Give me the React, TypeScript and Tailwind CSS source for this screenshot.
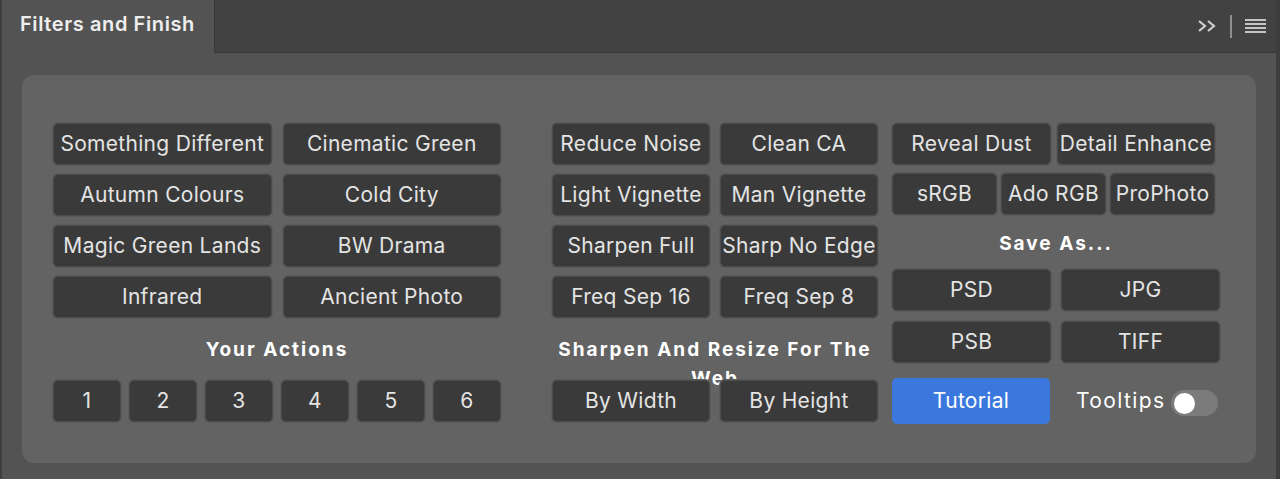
import type { ReactNode } from "react"

const font = { fontFamily: "Inter, 'Liberation Sans', sans-serif" }

const Btn = ({ children, className = "" }: { children: ReactNode; className?: string }) => (
  <div
    className={`relative flex h-[42px] items-center justify-center whitespace-nowrap rounded-[5px] border border-[#4c4c4c] bg-[#3a3a3a] text-[21px] tracking-[0.3px] text-[#e4e4e4] shadow-[0_0_0_1px_#5a5a5a] ${className}`}
  >
    {children}
  </div>
)

const Title = ({ children }: { children: ReactNode }) => (
  <div className="mt-[17px] h-[29px] text-center text-[19px] font-bold leading-[29px] tracking-[2px] text-white">
    {children}
  </div>
)

export default function App() {
  return (
    <div className="flex h-[479px] w-[1280px] flex-col overflow-hidden bg-[#535353]" style={font}>
      {/* header */}
      <div className="flex h-[53px] shrink-0">
        <div className="flex w-[214px] items-start border-l-[2px] border-[#3d3d3d] bg-[#535353] pl-[18px] pt-[9px]">
          <span className="text-[20px] font-semibold tracking-[0.6px] text-[#eeeeee]">Filters and Finish</span>
        </div>
        <div className="flex flex-1 items-center justify-end border-b border-l border-[#383838] bg-[#424242] pr-[10px]">
          <svg width="20" height="14" viewBox="0 0 20 14" className="mr-[13px]">
            <path d="M2 2l6 5-6 5M11 2l6 5-6 5" fill="none" stroke="#cfcfcf" strokeWidth="2.2" />
          </svg>
          <div className="mr-[13px] h-[23px] w-[2px] bg-[#8e8e8e]" />
          <svg width="21" height="16" viewBox="0 0 21 16">
            <rect x="0" y="1" width="21" height="2" fill="#c4c4c4" />
            <rect x="0" y="5" width="21" height="2" fill="#c4c4c4" />
            <rect x="0" y="9" width="21" height="2" fill="#c4c4c4" />
            <rect x="0" y="13" width="21" height="2" fill="#c4c4c4" />
          </svg>
        </div>
        <div className="w-[4px] bg-[#3d3d3d]" />
      </div>

      {/* body */}
      <div className="flex flex-1">
        <div className="w-[2px] bg-[#3d3d3d]" />
        <div className="flex-1 pl-[20px] pr-[20px] pt-[22px]">
          <div className="flex h-[388px] rounded-[12px] bg-[#636363] pl-[31px] pt-[48px]">
            {/* column 1 */}
            <div className="flex w-[448px] flex-col">
              <div className="grid grid-cols-2 gap-x-[11px] gap-y-[9px]">
                <Btn>Something Different</Btn>
                <Btn>Cinematic Green</Btn>
                <Btn>Autumn Colours</Btn>
                <Btn>Cold City</Btn>
                <Btn>Magic Green Lands</Btn>
                <Btn>BW Drama</Btn>
                <Btn>Infrared</Btn>
                <Btn>Ancient Photo</Btn>
              </div>
              <Title>Your Actions</Title>
              <div className="mt-[16px] flex justify-between">
                {["1", "2", "3", "4", "5", "6"].map((n) => (
                  <Btn key={n} className="w-[68px]">
                    {n}
                  </Btn>
                ))}
              </div>
            </div>

            {/* column 2 */}
            <div className="ml-[51px] flex w-[326px] flex-col">
              <div className="grid grid-cols-2 gap-x-[10px] gap-y-[9px]">
                <Btn>Reduce Noise</Btn>
                <Btn>Clean CA</Btn>
                <Btn>Light Vignette</Btn>
                <Btn>Man Vignette</Btn>
                <Btn>Sharpen Full</Btn>
                <Btn>Sharp No Edge</Btn>
                <Btn>Freq Sep 16</Btn>
                <Btn>Freq Sep 8</Btn>
              </div>
              <Title>Sharpen And Resize For The Web</Title>
              <div className="mt-[16px] grid grid-cols-2 gap-x-[10px]">
                <Btn>By Width</Btn>
                <Btn>By Height</Btn>
              </div>
            </div>

            {/* column 3 */}
            <div className="ml-[14px] flex w-[328px] flex-col">
              <div className="flex w-[323px] gap-[6px]">
                <Btn className="w-[159px]">Reveal Dust</Btn>
                <Btn className="flex-1">Detail Enhance</Btn>
              </div>
              <div className="mt-[8px] flex w-[323px] gap-[4px]">
                <Btn className="flex-1">sRGB</Btn>
                <Btn className="flex-1">Ado RGB</Btn>
                <Btn className="flex-1">ProPhoto</Btn>
              </div>
              <div className="mt-[17px] h-[24px] text-center text-[19px] font-bold leading-[24px] tracking-[2px] text-white">
                Save As...
              </div>
              <div className="mt-[13px] grid grid-cols-2 gap-x-[10px] gap-y-[10px]">
                <Btn>PSD</Btn>
                <Btn>JPG</Btn>
                <Btn>PSB</Btn>
                <Btn>TIFF</Btn>
              </div>
              <div className="mt-[15px] flex items-center">
                <div className="flex h-[46px] w-[158px] items-center justify-center rounded-[5px] bg-[#3b78de] text-[21px] tracking-[0.3px] text-white">
                  Tutorial
                </div>
                <span className="ml-[26px] text-[21px] tracking-[1.4px] text-white">Tooltips</span>
                <div className="ml-[5px] mt-[4px] flex h-[26px] w-[47px] items-center rounded-full bg-[#7b7b7b] pl-[3px]">
                  <div className="h-[21px] w-[21px] rounded-full bg-white" />
                </div>
              </div>
            </div>
          </div>
        </div>
        <div className="w-[4px] bg-[#3d3d3d]" />
      </div>
    </div>
  )
}
